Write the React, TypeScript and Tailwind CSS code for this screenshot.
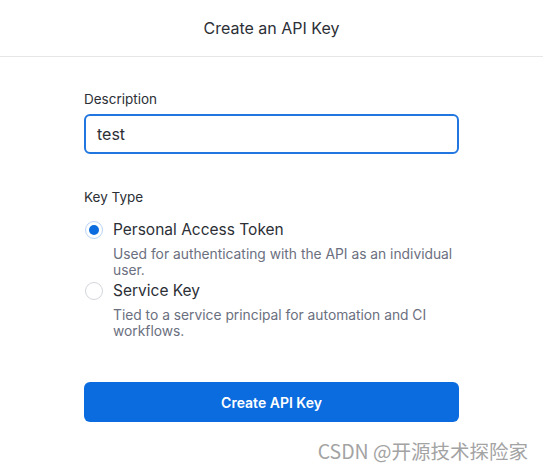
import { useState } from "react"

const keyTypes = [
  {
    id: "pat",
    label: "Personal Access Token",
    help: "Used for authenticating with the API as an individual user.",
  },
  {
    id: "service",
    label: "Service Key",
    help: "Tied to a service principal for automation and CI workflows.",
  },
]

export default function App() {
  const [description, setDescription] = useState("test")
  const [keyType, setKeyType] = useState("pat")

  return (
    <div className="relative h-[471px] w-full bg-white font-['Inter',sans-serif] text-[#1f2329]">
      {/* Header */}
      <header className="flex h-[57px] items-center justify-center border-b border-[#e6e6e6]">
        <h1 className="text-[16px] text-[#2c2f36]">Create an API Key</h1>
      </header>

      <main className="mx-auto w-[375px] pt-[34px]">
        <label className="block text-[13.5px] leading-[17px] text-[#2c2f36]">Description</label>
        <input
          value={description}
          onChange={(e) => setDescription(e.target.value)}
          className="mt-[6px] h-[40px] w-full rounded-[6px] border-2 border-[#2176e0] px-[11px] text-[16px] text-[#2c2f36] outline-none"
        />

        <div className="mt-[35px] text-[13.5px] leading-[17px] text-[#2c2f36]">Key Type</div>
        <div className="mt-[12px] flex flex-col gap-[1px]">
          {keyTypes.map((t) => {
            const selected = keyType === t.id
            return (
              <label key={t.id} className="flex cursor-pointer gap-[10px] pl-[1px]" onClick={() => setKeyType(t.id)}>
                <span
                  className={
                    selected
                      ? "mt-[3px] flex h-[18px] w-[18px] shrink-0 items-center justify-center rounded-full border border-[#b9d4f5]"
                      : "mt-[3px] flex h-[18px] w-[18px] shrink-0 items-center justify-center rounded-full border border-[#d4d6dc]"
                  }
                >
                  {selected && <span className="h-[10px] w-[10px] rounded-full bg-[#0b6cdf]" />}
                </span>
                <span className="flex flex-col">
                  <span className="text-[15.5px] leading-[24px] text-[#2c2f36]">{t.label}</span>
                  <span className="mt-[4px] text-[13.8px] leading-[16px] text-[#6b6f80]">{t.help}</span>
                </span>
              </label>
            )
          })}
        </div>

        <button className="mt-[43px] h-[40px] w-full rounded-[6px] bg-[#0b6cdf] text-[14px] font-semibold text-white">
          Create API Key
        </button>
      </main>

      {/* watermark */}
      <div className="absolute bottom-[6px] right-[15px] font-['Noto_Sans_CJK_SC',sans-serif] text-[19.5px] text-[#a3a3a3] [text-shadow:0_0_1px_#ffffff]">
        CSDN @开源技术探险家
      </div>
    </div>
  )
}
